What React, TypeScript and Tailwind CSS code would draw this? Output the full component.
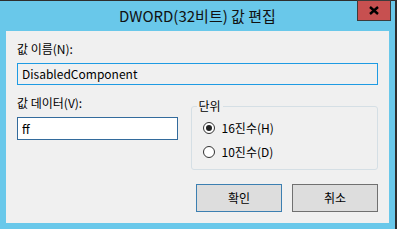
import { useState } from 'react';

const FONT = { fontFamily: '"Noto Sans CJK KR", "Noto Sans", sans-serif' };

function Radio({ checked, label, onSelect }: { checked: boolean; label: string; onSelect: () => void }) {
  return (
    <button className="flex items-center gap-[7px] h-[16px] text-[12px] leading-[16px] text-black" onClick={onSelect}>
      <span className="flex h-[12px] w-[12px] items-center justify-center rounded-full border border-[#333] bg-white">
        {checked && <span className="h-[6px] w-[6px] rounded-full bg-[#222]" />}
      </span>
      {label}
    </button>
  );
}

export default function App() {
  const [base, setBase] = useState<'hex' | 'dec'>('hex');
  const [value, setValue] = useState('ff');

  return (
    <div className="w-[397px] h-[229px] border-t border-r-2 border-[#2e2e2e] bg-[#69c8ea] flex flex-col" style={FONT}>
      {/* Title bar */}
      <div className="relative h-[30px] flex items-center justify-center">
        <span className="text-[15px] leading-[20px] text-[#111]">DWORD(32비트) 값 편집</span>
        <button className="absolute right-[4px] top-[-1px] w-[34px] h-[21px] border border-[#3c3c3c] bg-[#c75050] flex items-center justify-center">
          <svg width="10" height="9" viewBox="0 0 10 9">
            <path d="M1 1 L9 8 M9 1 L1 8" stroke="#000" strokeWidth="2.4" />
          </svg>
        </button>
      </div>

      {/* Client area */}
      <div className="ml-[6px] mr-[6px] h-[192px] bg-[#f0f0f0] px-[11px] pt-[10px]">
        <div className="text-[12px] leading-[16px] text-black">값 이름(N):</div>
        <div className="mt-[6px] h-[22px] border border-[#1e9be3] bg-[#f0f0f0] px-[4px] text-[12px] leading-[20px] text-black">
          DisabledComponent
        </div>

        <div className="mt-[10px] flex">
          <div className="w-[161px] flex flex-col">
            <div className="text-[12px] leading-[16px] text-black">값 데이터(V):</div>
            <input
              className="mt-[6px] h-[23px] border border-[#336b9c] bg-white px-[4px] text-[12px] text-black outline-none"
              style={FONT}
              value={value}
              onChange={(e) => setValue(e.target.value)}
            />
          </div>

          <div className="relative ml-[13px] mt-[11px] w-[188px] h-[64px] rounded-[3px] border border-[#d5dfe5] pl-[11px] pt-[13px] flex flex-col gap-[8px]">
            <span className="absolute left-[5px] top-[-9px] bg-[#f0f0f0] px-[2px] text-[12px] leading-[16px] text-black">단위</span>
            <Radio checked={base === 'hex'} label="16진수(H)" onSelect={() => setBase('hex')} />
            <Radio checked={base === 'dec'} label="10진수(D)" onSelect={() => setBase('dec')} />
          </div>
        </div>

        <div className="mt-[14px] flex justify-end gap-[10px]">
          <button className="w-[86px] h-[28px] border border-[#3c7fb1] bg-[#dddddd] text-[12px] text-black">확인</button>
          <button className="w-[86px] h-[28px] border border-[#707070] bg-[#dddddd] text-[12px] text-black">취소</button>
        </div>
      </div>
    </div>
  );
}
